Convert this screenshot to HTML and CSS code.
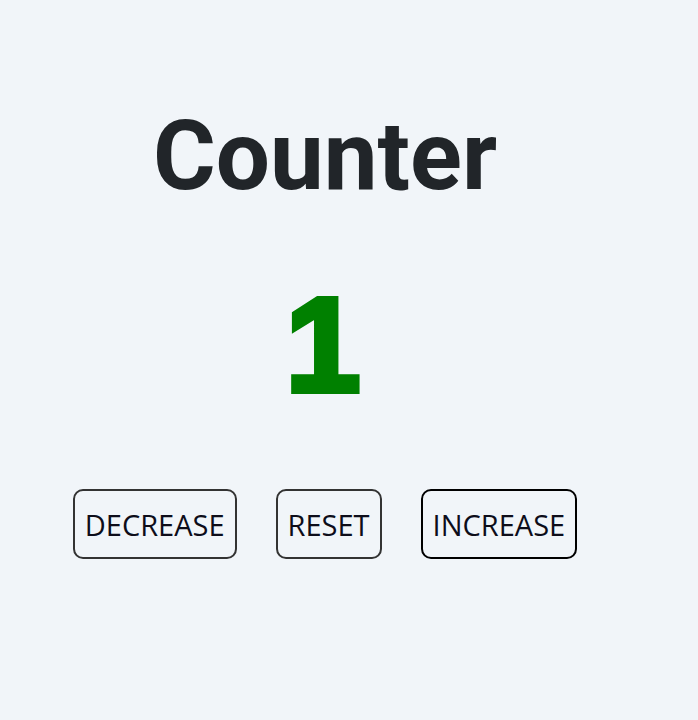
FILE: index.html
```html
<!DOCTYPE html>
<html>
<head>
<meta charset="utf-8">
<link rel="stylesheet" href="styles.css">
</head>
<body>
<div class="app">
  <h1 class="title">Counter</h1>
  <div class="count">1</div>
  <div class="buttons">
    <button class="btn">DECREASE</button>
    <button class="btn">RESET</button>
    <button class="btn btn-hover">INCREASE</button>
  </div>
</div>
</body>
</html>
```
FILE: styles.css
```css
html, body {
  margin: 0;
  padding: 0;
  background: #f1f5f9;
}
body {
  padding: 8px;
}
.app {
  width: 634px;
  display: flex;
  flex-direction: column;
  align-items: center;
}
.title {
  font-family: Roboto, "Liberation Sans", sans-serif;
  font-weight: 700;
  font-size: 96px;
  line-height: 1;
  color: #212529;
  margin: 100px 0 0 0;
}
.count {
  font-family: "Liberation Sans", Arial, sans-serif;
  font-weight: 700;
  font-size: 134px;
  line-height: 1;
  color: #008000;
  -webkit-text-stroke: 6px #008000;
  margin-top: 74px;
  margin-right: 4px;
}
.buttons {
  display: flex;
  gap: 39px;
  margin-top: 77px;
}
.btn {
  font-family: "Open Sans", "Noto Sans", sans-serif;
  font-size: 29px;
  color: #0d0d1a;
  background: #f1f5f9;
  border: 2px solid #333;
  border-radius: 10px;
  height: 70px;
  padding: 0 10px;
}
.btn-hover {
  border-color: #000;
}
```
